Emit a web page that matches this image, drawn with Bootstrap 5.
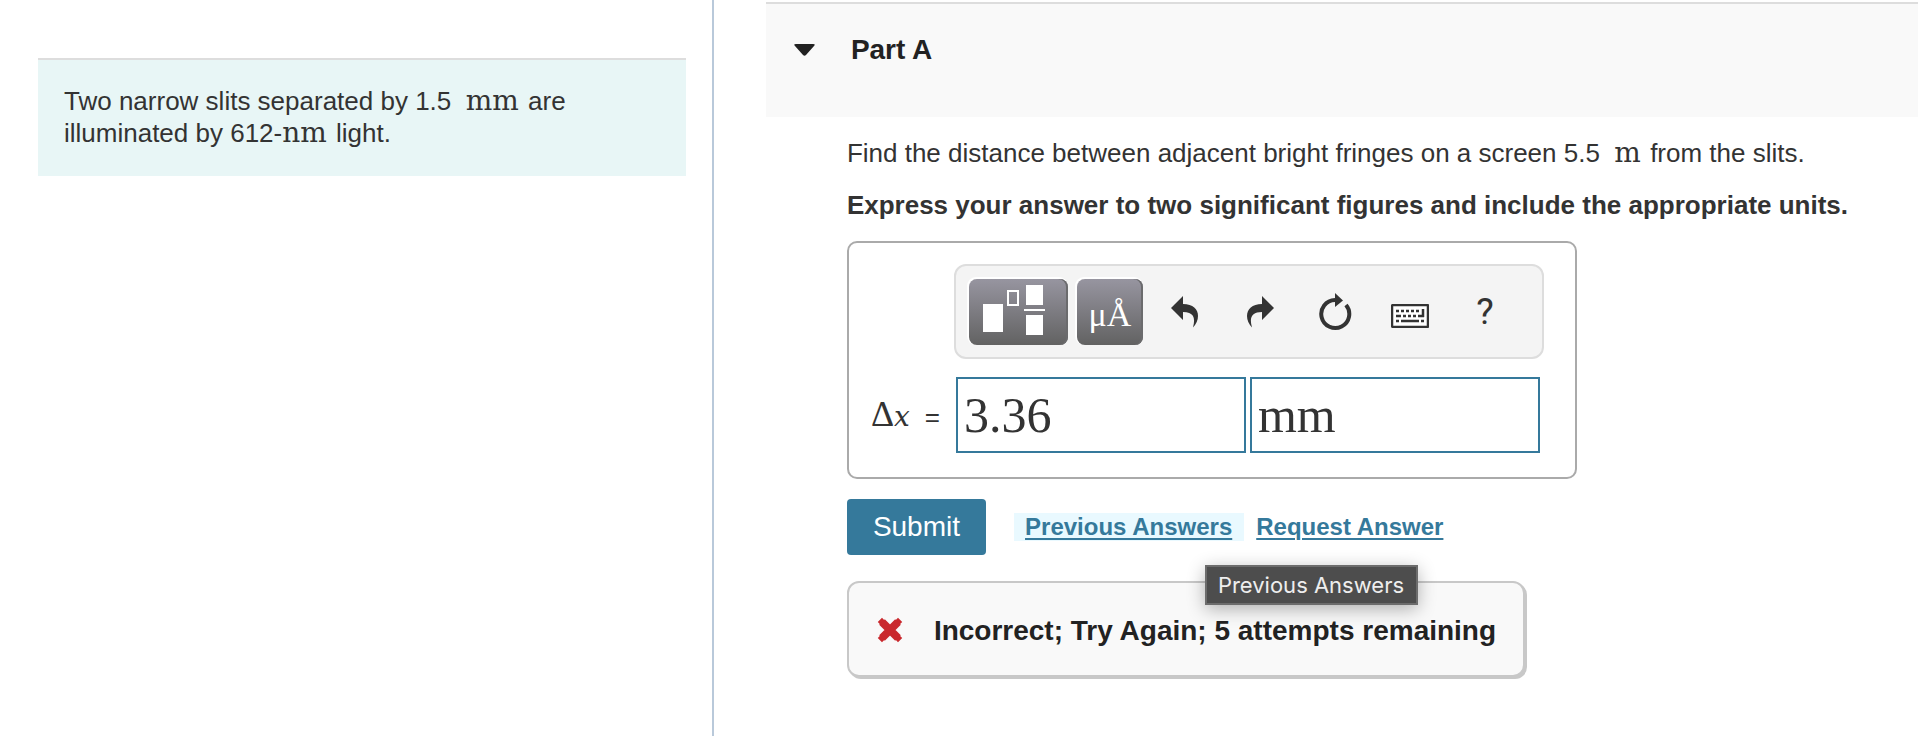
<!DOCTYPE html>
<html lang="en">
<head>
<meta charset="utf-8">
<meta name="viewport" content="width=device-width, initial-scale=1">
<title>Part A</title>
<link href="https://cdn.jsdelivr.net/npm/bootstrap@5.3.0/dist/css/bootstrap.min.css" rel="stylesheet">
<style>
  body { font-family: "Liberation Sans", Arial, sans-serif; font-size: 26px; line-height: 32px; color: #333; background: #fff; }
  .problem-pane { flex: 0 0 37.22%; padding: 58px 26px 26px 38px; border-right: 2px solid #b9c9da; }
  .intro-box { background: #e8f6f6; border-top: 2px solid #ddd; padding: 25px 26px 27px; }
  .intro-box p { max-width: 530px; }
  .unit { font-family: "DejaVu Serif", serif; font-size: 28px; line-height: 0; margin-right: 2px; }
  .answer-pane { padding: 2px 0 20px 52px; min-width: 0; }
  .part-header { background: #f9f9f9; border-top: 2px solid #ddd; padding: 32px 28px 53px; }
  .part-toggle { border: 0; background: none; padding: 0; color: #222; font-size: 28px; line-height: 28px; font-weight: 700; gap: 36px; }
  .part-body { padding: 20px 20px 0 81px; }
  .part-body > p { margin-bottom: 20px; }
  .answer-box { width: 730px; max-width: 100%; border: 2px solid #aaa; border-radius: 10px; padding: 21px 31px 24px 22px; }
  .label-col { flex: 0 0 85px; padding-right: 16px; }
  .delta { font-family: "Liberation Serif", serif; font-size: 36px; }
  .delta i { font-family: "DejaVu Serif", serif; font-size: 28px; }
  .math-toolbar { background: #f4f4f4; border: 2px solid #ddd; border-radius: 12px; padding: 13px; padding-bottom: 12px; gap: 9px; margin-left: -2px; }
  .tool { width: 66px; height: 66px; border: 0; padding: 0; background: none; color: #333; display: flex; align-items: center; justify-content: center; }
  .tool-dark { background: linear-gradient(#9795a0, #626262); border-radius: 8px; color: #fff; box-shadow: -1px -1px 0 1px #fff, inset -2px 0 0 #6b6b6d; font-family: "Liberation Serif", serif; font-size: 34px; padding-top: 6px; }
  .tool-wide { width: 99px; padding-top: 0; }
  .tool-help { font-family: Roboto, sans-serif; font-size: 37px; }
  .fields-row { margin-top: 18px; }
  .fields { gap: 4px; margin-right: 4px; min-width: 0; }
  .answer-field { flex: 1 1 0; width: 0; min-width: 0; height: 76px; border: 2px solid #35799b; border-radius: 0; padding: 0 6px; font-family: "Liberation Serif", "Times New Roman", serif; font-size: 50px; color: #333; outline: 0; }
  .btn-submit { background: #35799b; color: #fff; border: 0; border-radius: 4px; font-size: 28px; line-height: 32px; padding: 12px 26px; }
  .btn-submit:hover { background: #2b6785; color: #fff; }
  .actions { margin-top: 20px; }
  .action-link { color: #35799b; font-size: 24px; line-height: 28px; font-weight: 700; text-decoration: underline; text-decoration-thickness: 2px; text-underline-offset: 3px; }
  .visited-answers { background: #e9f9ff; padding: 0 12px 0 11px; margin-left: 28px; margin-right: 12px; }
  .feedback { width: 678px; max-width: 100%; margin-top: 26px; background: #f9f9f9; border: 2px solid #c8c8c8; border-radius: 12px; box-shadow: 2px 2px 0 #c8c8c8; padding: 30px 20px 27px 27px; gap: 30px; color: #222; font-size: 28px; font-weight: 700; line-height: 35px; }
  .hover-tip { top: -18px; left: 356px; background: #4d4d4d; border: 2px solid #6c6c6c; color: #eee; font-family: Inter, sans-serif; font-size: 22px; font-weight: 400; line-height: 36px; padding: 0 12px 0 11px; white-space: nowrap; box-shadow: 0 4px 18px rgba(0,0,0,.3); }
</style>
<script src="https://cdn.jsdelivr.net/npm/bootstrap@5.3.0/dist/js/bootstrap.bundle.min.js"></script>
</head>
<body>
<div class="d-flex min-vh-100">
  <aside class="problem-pane">
    <div class="intro-box"><p class="mb-0">Two narrow slits separated by 1.5 &nbsp;<span class="unit">mm</span> are illuminated by 612-<span class="unit">nm</span> light.</p></div>
  </aside>
  <main class="answer-pane flex-grow-1">
    <header class="part-header">
      <h2 class="m-0 lh-1 d-flex"><button class="part-toggle d-flex align-items-center" type="button" aria-expanded="true">
        <svg width="21" height="12" viewBox="0 0 21 12" aria-hidden="true"><path d="M2 0H19Q22 0 20 2L12 11Q10.500 12.500 9 11L1 2Q-1 0 2 0Z" fill="#222"/></svg>
        <span>Part A</span></button></h2>
    </header>
    <section class="part-body">
      <p>Find the distance between adjacent bright fringes on a screen 5.5 &nbsp;<span class="unit">m</span> from the slits.</p>
      <p class="fw-bold">Express your answer to two significant figures and include the appropriate units.</p>
      <form onsubmit="return false">
        <div class="answer-box">
          <div class="d-flex">
            <div class="label-col"></div>
            <div class="math-toolbar d-flex flex-grow-1" role="toolbar" aria-label="Math tools">
              <button class="tool tool-dark tool-wide" type="button" aria-label="Templates">
                <svg width="98" height="66" viewBox="0 0 98 66"><g fill="#fff"><path d="M14 25h20v28H14zM57 6h17v20H57zM55 30h21v2H55zM57 36h17v20H57z"/></g><path d="M39 12h10v14H39z" fill="none" stroke="#fff" stroke-width="2"/></svg>
              </button>
              <button class="tool tool-dark" type="button" aria-label="Symbols">μÅ</button>
              <button class="tool" type="button" aria-label="Undo"><svg width="28" height="32" viewBox="0 0 28 32"><path d="M0 12L12 0V8C22 8 27 13 27 20Q27 26 22 31.500C25 21 22 16 12 16V24Z" fill="#333"/></svg></button>
              <button class="tool" type="button" aria-label="Redo"><svg width="28" height="32" viewBox="0 0 28 32"><path d="M28 12L16 0V8C6 8 1 13 1 20Q1 26 6 31.500C3 21 6 16 16 16V24Z" fill="#333"/></svg></button>
              <button class="tool" type="button" aria-label="Reset"><svg width="34" height="38" viewBox="0 0 34 38"><path d="M17 7A14 14 0 1 0 28 12" fill="none" stroke="#333" stroke-width="4"/><path d="M17 0L25 7.500L17 14Z" fill="#333"/></svg></button>
              <button class="tool" type="button" aria-label="Keyboard"><svg class="mt-2" width="38" height="24" viewBox="0 0 38 24"><rect x="1" y="1" width="36" height="22" rx="1" fill="#fff" stroke="#333" stroke-width="2.500"/><path d="M5 7h3M10 7h3M15 7h3M20 7h3M25 7h3M5 12h5M12 12h3M17 12h3M22 12h3M27 12h6M5 17h3M10 17h18M30 17h3" stroke="#333" stroke-width="2.500"/><path d="M32 5v8" stroke="#333" stroke-width="2.500"/></svg></button>
              <button class="tool tool-help" type="button" aria-label="Help">?</button>
            </div>
          </div>
          <div class="fields-row d-flex align-items-center">
            <label class="label-col d-flex justify-content-between align-items-baseline" for="value"><span class="delta">Δ<i>x</i></span><span>=</span></label>
            <div class="fields d-flex flex-grow-1">
              <input class="answer-field" id="value" type="text" value="3.36">
              <input class="answer-field" type="text" value="mm" aria-label="Units">
            </div>
          </div>
        </div>
        <div class="actions d-flex align-items-center">
          <button class="btn btn-submit" type="submit">Submit</button>
          <a class="action-link visited-answers" href="#">Previous Answers</a>
          <a class="action-link" href="#">Request Answer</a>
        </div>
      </form>
      <div class="feedback position-relative d-flex align-items-center" role="status">
        <svg class="flex-shrink-0" width="28" height="28" viewBox="0 0 28 28" aria-hidden="true"><path d="M6 5L22 21M22 5L6 21" stroke="#c9282d" stroke-width="6" stroke-linecap="square"/><path d="M6 5L22 21M22 5L6 21" stroke="#c9282d" stroke-width="8" stroke-linecap="butt"/></svg>
        <span>Incorrect; Try Again; 5 attempts remaining</span>
        <div class="hover-tip position-absolute" role="tooltip">Previous Answers</div>
      </div>
    </section>
  </main>
</div>
</body>
</html>
